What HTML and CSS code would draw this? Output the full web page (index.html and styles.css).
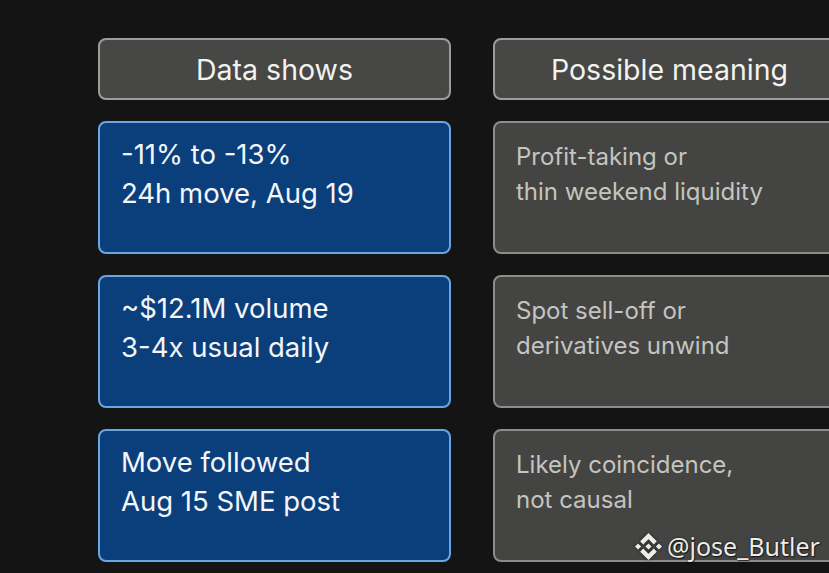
FILE: index.html
```html
<!DOCTYPE html>
<html lang="en">
<head>
<meta charset="utf-8">
<title>Data shows vs Possible meaning</title>
<link rel="stylesheet" href="styles.css">
</head>
<body>
<div class="board">
  <div class="column">
    <div class="head">Data shows</div>
    <div class="card data"><p>-11% to -13%</p><p>24h move, Aug 19</p></div>
    <div class="card data"><p>~$12.1M volume</p><p>3-4x usual daily</p></div>
    <div class="card data"><p>Move followed</p><p>Aug 15 SME post</p></div>
  </div>
  <div class="column">
    <div class="head">Possible meaning</div>
    <div class="card meaning"><p>Profit-taking or</p><p>thin weekend liquidity</p></div>
    <div class="card meaning"><p>Spot sell-off or</p><p>derivatives unwind</p></div>
    <div class="card meaning"><p>Likely coincidence,</p><p>not causal</p></div>
  </div>
</div>
<div class="watermark">
  <svg class="logo" viewBox="0 0 126 126" aria-hidden="true">
    <polygon points="38.2,53.2 63,28.6 87.6,53.2 101.9,38.9 63,0 24,38.9"/>
    <polygon points="0,63 14.3,48.7 28.6,63 14.3,77.3"/>
    <polygon points="48.5,63 63,48.5 77.5,63 63,77.5"/>
    <polygon points="97.4,63 111.7,48.7 126,63 111.7,77.3"/>
    <polygon points="87.6,72.8 63,97.4 38.2,72.8 24,87.1 63,126 101.9,87.1"/>
  </svg>
  <span class="handle">@jose_Butler</span>
</div>
</body>
</html>
```
FILE: styles.css
```css
html, body {
  margin: 0;
  padding: 0;
  background: #141414;
  width: 829px;
  height: 573px;
  overflow: hidden;
}
body {
  font-family: Inter, "Noto Sans", "Liberation Sans", sans-serif;
  position: relative;
}
.board {
  display: flex;
  gap: 42px;
  padding: 38px 0 0 98px;
  width: 829px;
  box-sizing: border-box;
  overflow: hidden;
}
.column {
  display: flex;
  flex-direction: column;
  gap: 21px;
  width: 353px;
  flex: none;
}
.head {
  box-sizing: border-box;
  height: 62px;
  border: 2px solid #9d9d99;
  border-radius: 8px;
  background: #474745;
  color: #f2f2ee;
  font-size: 28.5px;
  display: flex;
  align-items: center;
  justify-content: center;
}
.card {
  box-sizing: border-box;
  height: 133px;
  border-radius: 8px;
  border: 2px solid;
}
.card p { margin: 0; }
.data {
  background: #0b3f7b;
  border-color: #6aa6e6;
  color: #f4f6fa;
  font-size: 27.5px;
  line-height: 39px;
  padding: 12px 20px 0 21px;
}
.meaning {
  background: #444442;
  border-color: #8c8c88;
  color: #c4c4c0;
  font-size: 24px;
  line-height: 35px;
  padding: 16px 20px 0 21px;
}
.watermark {
  position: absolute;
  left: 635px;
  top: 530px;
  display: flex;
  align-items: center;
  gap: 5px;
  color: #ececea;
}
.logo {
  width: 27px;
  height: 27px;
  fill: #ececea;
  filter: drop-shadow(0 0 1.5px rgba(0,0,0,0.7));
}
.handle {
  font-family: "Noto Sans", "DejaVu Sans", sans-serif;
  font-size: 25px;
  line-height: 32px;
  text-shadow: 0 0 2px rgba(0,0,0,0.8), 1px 1px 1px rgba(0,0,0,0.6);
}
```
